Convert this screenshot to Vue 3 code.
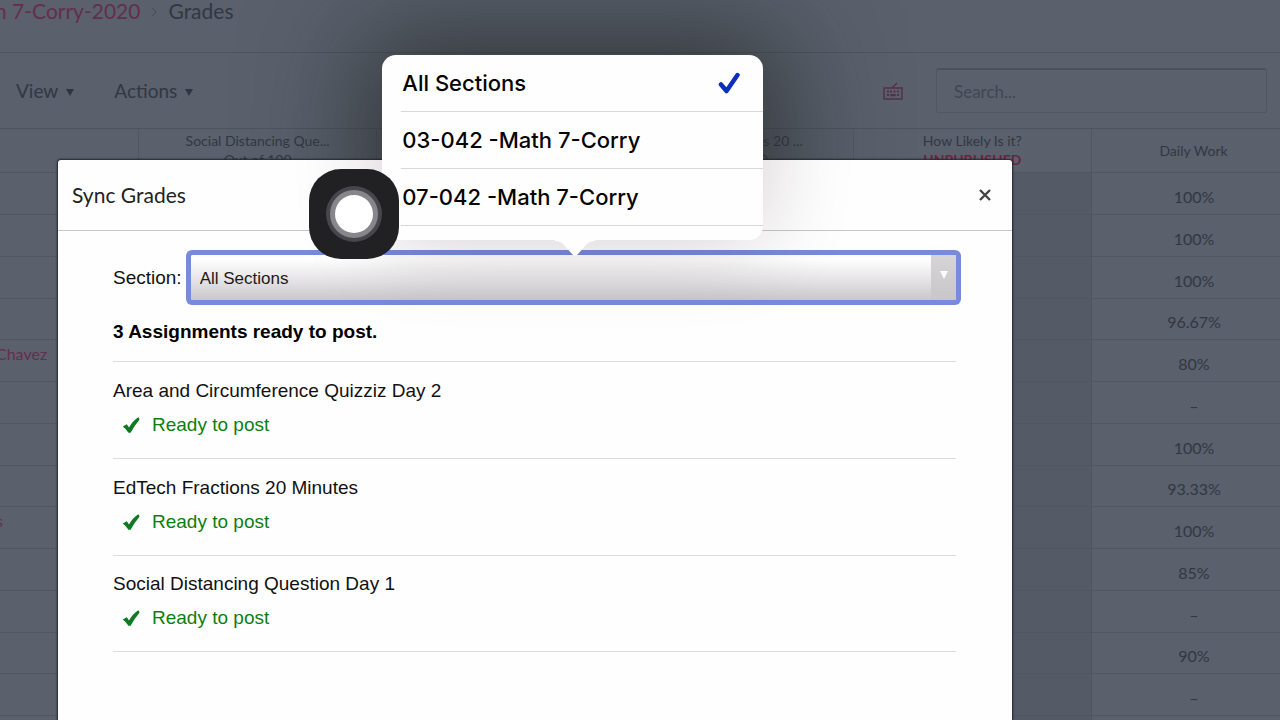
<script setup>
import { ref } from 'vue'

const sections = ['All Sections', '03-042 -Math 7-Corry', '07-042 -Math 7-Corry']
const section = ref('All Sections')
const search = ref('')

const assignments = [
  'Area and Circumference Quizziz Day 2',
  'EdTech Fractions 20 Minutes',
  'Social Distancing Question Day 1'
]

const rows = [
  { name: '', work: '100%' },
  { name: '', work: '100%' },
  { name: '', work: '100%' },
  { name: '', work: '96.67%' },
  { name: 'Chavez', work: '80%' },
  { name: '', work: '–' },
  { name: '', work: '100%' },
  { name: '', work: '93.33%' },
  { name: 's', work: '100%' },
  { name: '', work: '85%' },
  { name: '', work: '–' },
  { name: '', work: '90%' },
  { name: '', work: '–' },
  { name: '', work: '' }
]
</script>

<template>
  <div class="screen">
    <div class="page">
      <nav class="crumbs" aria-label="Breadcrumb">
        <a href="#">Math 7-Corry-2020</a>
        <svg class="chevron" viewBox="0 0 8 12" aria-hidden="true"><path d="M2 1.500 6 6 2 10.500" /></svg>
        <span>Grades</span>
      </nav>
      <div class="toolbar">
        <button type="button" class="menu">View
          <svg viewBox="0 0 8 7" aria-hidden="true"><path d="M0 0h8L4 7z" /></svg>
        </button>
        <button type="button" class="menu">Actions
          <svg viewBox="0 0 8 7" aria-hidden="true"><path d="M0 0h8L4 7z" /></svg>
        </button>
        <button type="button" class="keyboard" aria-label="Keyboard shortcuts">
          <svg viewBox="0 0 20 18" aria-hidden="true">
            <path d="M1 6h18v11H1zM9.500 5.500 14 1" fill="none" stroke="currentColor" stroke-width="1.400" />
            <path d="M4 8.500h2v2H4zM7 8.500h2v2H7zM10.500 8.500h2v2h-2zM14 8.500h2v2h-2zM4 12h2v2H4zM7.300 12h5.400v2.300H7.300zM14 12h2v2h-2z" fill="currentColor" />
          </svg>
        </button>
        <input v-model="search" class="search" type="text" placeholder="Search..." aria-label="Search" />
      </div>
      <table class="grid">
        <colgroup>
          <col class="c-name" /><col /><col /><col /><col /><col class="c-work" />
        </colgroup>
        <thead>
          <tr>
            <th></th>
            <th>Social Distancing Que...<br />Out of 100</th>
            <th></th>
            <th>EdTech Fractions 20 ...<br />Out of 100</th>
            <th>How Likely Is it?<br /><strong>UNPUBLISHED</strong></th>
            <th class="total">Daily Work</th>
          </tr>
        </thead>
        <tbody>
          <tr v-for="(row, i) in rows" :key="i">
            <td class="student"><a v-if="row.name" href="#">{{ row.name }}</a></td>
            <td></td>
            <td></td>
            <td></td>
            <td class="muted"></td>
            <td class="work">{{ row.work }}</td>
          </tr>
        </tbody>
      </table>
      <div class="shade"></div>
    </div>

    <section class="dialog" role="dialog" aria-labelledby="dialog-title">
      <header>
        <h2 id="dialog-title">Sync Grades</h2>
        <button type="button" class="close" aria-label="Close">
          <svg viewBox="0 0 12 12" aria-hidden="true"><path d="M1 1l10 10M11 1L1 11" /></svg>
        </button>
      </header>
      <div class="body">
        <div class="field">
          <label for="section">Section:</label>
          <div class="picker">
            <select id="section" v-model="section">
              <option v-for="s in sections" :key="s">{{ s }}</option>
            </select>
            <span class="drop" aria-hidden="true">
              <svg viewBox="0 0 8 8"><path d="M0 0h8L4 8z" /></svg>
            </span>
            <div class="popover">
              <button v-for="s in sections" :key="s" type="button" @click="section = s">
                {{ s }}
                <svg v-if="s === section" viewBox="0 0 24 22" aria-hidden="true"><path d="M4 12.500l5.500 6.500L20.500 3" /></svg>
              </button>
              <svg class="tail" viewBox="0 0 40 17" aria-hidden="true">
                <path d="M0 0h40v1c-4 0-6 1-9 4l-8 9q-3 3-6 0L9 5C6 2 4 1 0 1z" />
              </svg>
            </div>
          </div>
        </div>
        <p class="summary">3 Assignments ready to post.</p>
        <ul>
          <li v-for="a in assignments" :key="a">
            <div>{{ a }}</div>
            <div class="ready">
              <svg viewBox="0 0 18 18" aria-hidden="true"><path d="M.8 10.500 4.800 8.300 7 11.500Q10.500 5 16.300 1.200L17.300 2.400V4Q12.500 9.500 8.600 16.800H6.500Q4.500 13.300 .8 10.500z" /></svg>
              Ready to post
            </div>
          </li>
        </ul>
      </div>
    </section>

    <button type="button" class="assist" aria-label="Assistive touch">
      <span></span>
    </button>
  </div>
</template>

<style>
body {
  margin: 0;
  background: #5a606c;
}
</style>

<style scoped>
.screen {
  position: relative;
  height: 100vh;
  overflow: hidden;
  font-family: "Liberation Sans", Arial, sans-serif;
  color: #111;
}
.page {
  position: relative;
  height: 100%;
  overflow: hidden;
  background: #5a606c;
  color: #323843;
  font-family: Lato, sans-serif;
}
button {
  border: 0;
  padding: 0;
  background: none;
  font: inherit;
  color: inherit;
}
a {
  color: #632f4b;
  text-decoration: none;
}
.crumbs {
  display: flex;
  align-items: center;
  height: 53px;
  padding-bottom: 31px;
  margin-left: -42px;
  box-sizing: border-box;
  border-bottom: 1px solid #4d535f;
  font-size: 21px;
  line-height: 22px;
}
.chevron {
  width: 8px;
  height: 12px;
  margin: 2px 10px 0;
  fill: none;
  stroke: #434955;
}
.toolbar {
  display: flex;
  align-items: center;
  height: 76px;
  box-sizing: border-box;
  padding: 0 13px 0 16px;
  border-bottom: 1px solid #4d535f;
}
.menu {
  display: flex;
  align-items: center;
  gap: 8px;
  margin-right: 40px;
  font-size: 19px;
}
.menu svg {
  width: 8px;
  height: 7px;
  margin-top: 4px;
  fill: #303641;
}
.keyboard {
  margin-left: auto;
  margin-right: 33px;
  color: #56304a;
}
.keyboard svg {
  display: block;
  width: 20px;
  height: 18px;
}
.search {
  width: 331px;
  height: 45px;
  box-sizing: border-box;
  padding: 0 17px;
  border: 1px solid #505662;
  border-top: 2px solid #4b515d;
  border-radius: 3px;
  background: transparent;
  color: #323843;
  font: 17px Lato, sans-serif;
}
.search::placeholder {
  color: #414753;
  opacity: 1;
}
.grid {
  width: calc(100% + 16px);
  table-layout: fixed;
  border-collapse: separate;
  border-spacing: 0;
}
.c-name {
  width: 139px;
}
.c-work {
  width: 204px;
}
th,
td {
  padding: 0;
  box-sizing: border-box;
  border-bottom: 1px solid #505662;
}
th {
  height: 44px;
  padding-top: 2px;
  vertical-align: top;
  border-right: 1px solid #505662;
  font-size: 14px;
  font-weight: 400;
  line-height: 19px;
}
th strong {
  color: #6b2440;
  font-weight: 700;
}
.total {
  vertical-align: middle;
  padding: 0;
}
td {
  height: 42px;
}
tr:nth-child(4n) td {
  height: 41px;
}
.student {
  vertical-align: top;
  padding-top: 3px;
  font-size: 16px;
  line-height: 22px;
}
.student a {
  margin-left: -4px;
}
.muted {
  background: #545a66;
  border-right: 1px solid #4e5460;
}
.work {
  padding-top: 6px;
  text-align: center;
  font-size: 16px;
  line-height: 20px;
}
.shade {
  position: absolute;
  top: 55px;
  left: 382px;
  width: 381px;
  height: 185px;
  border-radius: 14px;
  box-shadow: 0 0 110px 24px rgba(48, 56, 56, 0.7);
}
.dialog {
  position: absolute;
  top: 160px;
  bottom: 0;
  left: 58px;
  right: 268px;
  border-radius: 3px 3px 0 0;
  background: #fffeff;
  box-shadow: 0 0 2px 1px #20262e;
  font-size: 19px;
}
header {
  display: flex;
  align-items: center;
  justify-content: space-between;
  height: 71px;
  box-sizing: border-box;
  padding: 0 21px 0 14px;
  border-bottom: 1px solid #c6c6c8;
}
h2 {
  margin: 0;
  padding-bottom: 2px;
  font: 400 21px Lato, sans-serif;
  color: #222;
}
.close svg {
  display: block;
  width: 12px;
  height: 12px;
  fill: none;
  stroke: #444;
  stroke-width: 2.400;
}
.body {
  padding: 24px 56px 0 55px;
}
.field {
  display: flex;
  align-items: center;
  gap: 9px;
}
.picker {
  position: relative;
  flex: 1;
}
select {
  display: block;
  width: 100%;
  height: 45px;
  padding: 2px 9px 0;
  border: 0;
  border-radius: 2px;
  appearance: none;
  background: linear-gradient(#fffeff 10%, #e3e1e3 60%, #c9c7c9);
  box-shadow: 0 0 0 5px #768bdb;
  color: #1a1a1a;
  font: 17px "Liberation Sans", Arial, sans-serif;
  outline: none;
}
.drop {
  position: absolute;
  top: 0;
  right: 0;
  bottom: 0;
  width: 25px;
  display: flex;
  justify-content: center;
  align-items: center;
  padding-bottom: 6px;
  box-sizing: border-box;
  background: linear-gradient(#d6d4d6, #c8c6c8);
  pointer-events: none;
}
.drop svg {
  width: 8px;
  height: 8px;
  fill: #fff;
}
.popover {
  position: absolute;
  bottom: calc(100% + 15px);
  left: 50%;
  width: 381px;
  margin-left: -191px;
  padding: 0 0 14px 19px;
  box-sizing: border-box;
  border-radius: 14px;
  background: #fffeff;
  box-shadow: 0 0 90px 0 rgba(20, 12, 12, 0.2);
  font-family: Inter, sans-serif;
}
.popover button {
  display: flex;
  align-items: center;
  justify-content: space-between;
  width: 100%;
  height: 57px;
  box-sizing: border-box;
  padding: 0 22px 0 1px;
  border-bottom: 1px solid #d8d7da;
  color: #050505;
  font-size: 22px;
  font-weight: 500;
}
.popover button svg {
  width: 24px;
  height: 22px;
  fill: none;
  stroke: #0c2fc0;
  stroke-width: 4.500;
  stroke-linecap: round;
  stroke-linejoin: round;
}
.tail {
  position: absolute;
  top: 100%;
  left: 50%;
  width: 40px;
  height: 17px;
  margin: 0 0 0 -18px;
  fill: #fffeff;
}
.summary {
  margin: 20px 0 0;
  padding-bottom: 18px;
  border-bottom: 1px solid #dcdbdf;
  font-weight: 700;
  line-height: 23px;
  color: #000;
}
ul {
  margin: 0;
  padding: 0;
  list-style: none;
}
li {
  height: 97px;
  box-sizing: border-box;
  padding-top: 18px;
  border-bottom: 1px solid #dcdbdf;
  line-height: 22px;
}
li:last-child {
  height: 96px;
  padding-top: 17px;
}
.ready {
  display: flex;
  align-items: center;
  gap: 12px;
  margin-top: 12px;
  padding-left: 9px;
  color: #0b800f;
}
.ready svg {
  width: 18px;
  height: 18px;
  fill: #0b7a20;
}
.assist {
  position: absolute;
  top: 169px;
  left: 309px;
  display: grid;
  place-items: center;
  width: 90px;
  height: 90px;
  border-radius: 32px;
  background: #212023;
}
.assist span {
  width: 38px;
  height: 38px;
  border-radius: 50%;
  background: #fff;
  box-shadow: 0 0 0 5px #87868a, 0 0 0 9px #47464a;
}
</style>
